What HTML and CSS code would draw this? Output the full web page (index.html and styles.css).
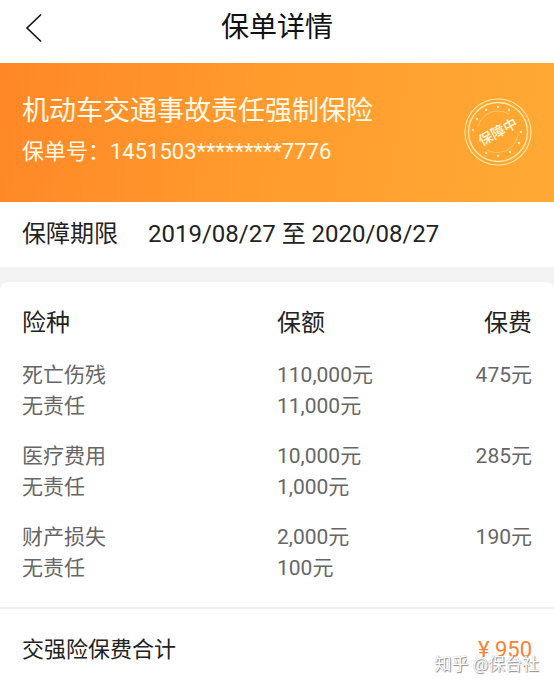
FILE: index.html
```
<!DOCTYPE html>
<html lang="zh-CN">
<head>
  <meta charset="UTF-8">
  <meta name="viewport" content="width=device-width, initial-scale=1.0">
  <title>保单详情</title>
  <link rel="stylesheet" href="styles.css">
</head>
<body>

<header class="topbar">
  <button class="back" type="button" aria-label="返回">
    <svg width="20" height="30" viewBox="0 0 20 30" fill="none" stroke="#111" stroke-width="1.6">
      <path d="M17 1.5 L3 15 L17 28.5"/>
    </svg>
  </button>
  <h1>保单详情</h1>
</header>

<section class="banner">
  <div class="banner-text">
    <h2>机动车交通事故责任强制保险</h2>
    <p>保单号：1451503*********7776</p>
  </div>
  <svg class="stamp" width="68" height="68" viewBox="0 0 68 68" fill="none" stroke="#ffe9a8">
    <circle cx="34" cy="34" r="33" stroke-width="1.1"/>
    <circle cx="34" cy="34" r="29.5" stroke-width="1.4"/>
    <path d="M14 28 A21 21 0 0 1 45 16" stroke-width=".7" opacity=".7"/>
    <path d="M54 35 A21 21 0 0 1 23 52" stroke-width=".7" opacity=".7"/>
    <g fill="#ffe9a8" stroke="none">
      <circle cx="9" cy="32" r="1.2"/>
      <circle cx="13" cy="21" r="1.2"/>
      <circle cx="22" cy="12" r="1.2"/>
      <circle cx="34" cy="9" r="1.2"/>
      <circle cx="45" cy="12" r="1.2"/>
      <circle cx="57" cy="34" r="1.2"/>
      <circle cx="55" cy="45" r="1.2"/>
      <circle cx="46" cy="54" r="1.2"/>
      <circle cx="34" cy="58" r="1.2"/>
      <circle cx="22" cy="55" r="1.2"/>
    </g>
    <text class="stamp-text" x="34" y="39" text-anchor="middle" transform="rotate(-29 34 34)">保障中</text>
  </svg>
</section>

<section class="period">
  <span>保障期限</span>
  <span>2019/08/27 至 2020/08/27</span>
</section>

<main class="card">
  <table class="coverage">
    <thead>
      <tr>
        <th class="col-name">险种</th>
        <th>保额</th>
        <th class="fee">保费</th>
      </tr>
    </thead>
    <tbody>
      <tr>
        <td>死亡伤残<br>无责任</td>
        <td>110,000元<br>11,000元</td>
        <td class="fee">475元</td>
      </tr>
      <tr>
        <td>医疗费用<br>无责任</td>
        <td>10,000元<br>1,000元</td>
        <td class="fee">285元</td>
      </tr>
      <tr>
        <td>财产损失<br>无责任</td>
        <td>2,000元<br>100元</td>
        <td class="fee">190元</td>
      </tr>
    </tbody>
  </table>
  <div class="total">
    <span>交强险保费合计</span>
    <span class="price">¥ 950</span>
    <span class="watermark">知乎 @保台社</span>
  </div>
</main>

</body>
</html>
```
FILE: styles.css
```
* {
  box-sizing: border-box;
}
body {
  margin: 0;
  font-family: Roboto, "Noto Sans CJK SC", sans-serif;
  font-size: 24px;
  color: #222;
  background-color: #fff;
}
h1, h2, p {
  margin: 0;
  font-weight: 400;
}
.topbar {
  display: grid;
  grid-template-columns: 1fr auto 1fr;
  align-items: center;
  padding: 7px 24px 14px;
}
.topbar h1 {
  font-size: 28px;
  line-height: 42px;
  color: #111;
}
.back {
  justify-self: start;
  padding: 0;
  border: 0;
  background: none;
  line-height: 0;
}
.banner {
  display: flex;
  justify-content: space-between;
  align-items: center;
  padding: 28px 22px 29px;
  color: #fffae8;
  background: linear-gradient(100deg, #ff8726, #ff9c2e 50%, #ffa934);
}
.banner h2 {
  font-size: 27px;
  line-height: 40px;
}
.banner p {
  font-size: 22px;
  line-height: 42px;
}
.stamp-text {
  font-size: 14px;
  font-weight: 500;
  fill: #fff8da;
  stroke: none;
}
.period {
  display: flex;
  gap: 30px;
  padding: 14px 22px 15px;
  line-height: 36px;
}
.card {
  border-top: 15px solid #f3f3f3;
  background: linear-gradient(#f3f3f3, #f3f3f3) top / 100% 8px no-repeat;
}
.coverage {
  width: 100%;
  padding: 23px 22px 4px;
  border-spacing: 0;
  table-layout: fixed;
  border-radius: 8px 8px 0 0;
  background-color: #fff;
}
.coverage th, .coverage td {
  padding: 0 0 19px;
  text-align: left;
  vertical-align: top;
}
.coverage th {
  font-weight: 400;
  line-height: 36px;
}
.coverage td {
  font-size: 21px;
  line-height: 31px;
  color: #666;
}
.coverage .col-name {
  width: 50%;
}
.coverage .fee {
  text-align: right;
}
.total {
  position: relative;
  display: flex;
  justify-content: space-between;
  padding: 25px 22px 21px;
  border-top: 2px solid #eee;
  font-size: 22px;
  line-height: 32px;
}
.price {
  color: #f58235;
}
/* sits over the price */
.watermark {
  position: absolute;
  right: 15px;
  bottom: 7px;
  font-size: 17px;
  color: #fff;
  text-shadow: 1px 1px 1px #888, 0 0 1px #aaa;
}
```
